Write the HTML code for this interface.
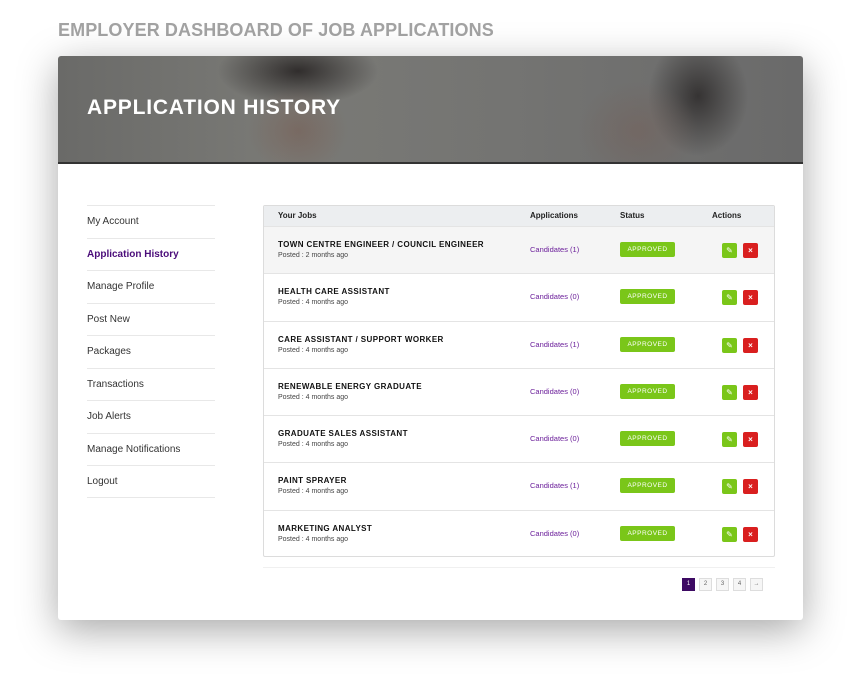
<!DOCTYPE html>
<html><head><style>
*{margin:0;padding:0;box-sizing:border-box}
body{width:861px;height:681px;background:#fff;font-family:"Liberation Sans",sans-serif;position:relative;overflow:hidden}
.title{position:absolute;left:58px;top:20px;font-size:18px;font-weight:bold;color:#a3a3a3;letter-spacing:0.1px}
.card{position:absolute;left:58px;top:56px;width:745px;height:564px;background:#fff;border-radius:3px;box-shadow:0 10px 40px rgba(0,0,0,0.35)}
.hero{position:absolute;left:0;top:0;width:745px;height:108px;border-radius:3px 3px 0 0;overflow:hidden;
background:
radial-gradient(ellipse 50px 45px at 240px 75px,rgba(120,95,85,.6),transparent),
radial-gradient(ellipse 80px 35px at 240px 15px,rgba(30,26,26,.8),transparent),
radial-gradient(ellipse 60px 50px at 580px 75px,rgba(115,98,92,.6),transparent),
radial-gradient(ellipse 50px 60px at 640px 40px,rgba(35,32,32,.75),transparent),
linear-gradient(90deg,#6a6a68 0%,#7a7a76 30%,#747472 60%,#6a6a6a 100%);border-bottom:2px solid #333}
.hero h1{position:absolute;left:29px;top:40px;color:#fff;font-size:21px;letter-spacing:0.8px;font-weight:bold}
.side{position:absolute;left:29px;top:149px;width:128px}
.side div{height:32.5px;border-top:1px solid #e8e8e8;font-size:10px;color:#333;line-height:31px}
.side div.last{border-bottom:1px solid #e8e8e8}
.side .act{color:#4b0d7a;font-weight:bold}
.tbl{position:absolute;left:205px;top:149px;width:512px;height:352px;border:1px solid #dcdcdc;border-radius:2px}
.th{height:20px;background:#eceef0;font-size:8px;font-weight:bold;color:#222;position:relative}
.th span,.row span{position:absolute}
.row{height:47.3px;border-top:1px solid #e4e4e4;position:relative}
.row.g{background:#f5f5f5}
.jt{left:14px;top:13px;font-size:8px;font-weight:bold;letter-spacing:.4px;color:#111}
.ps{left:14px;top:25px;font-size:7px;color:#444}
.cd{left:266px;top:18px;font-size:7.5px;color:#6b1f9a}
.ap{left:356px;top:15px;width:55px;height:15px;background:#7ac619;border-radius:2px;color:#fff;font-size:6.5px;text-align:center;line-height:15px;letter-spacing:.5px}
.ed{left:458px;top:16px;width:15px;height:15px;background:#7ac619;border-radius:2px;color:#fff;font-size:8px;text-align:center;line-height:15px}
.dl{left:479px;top:16px;width:15px;height:15px;background:#d91f1f;border-radius:2px;color:#fff;font-size:8px;text-align:center;line-height:15px;font-weight:bold}
.hr{position:absolute;left:205px;top:511px;width:512px;height:1px;background:#f0f0f0}
.pg{position:absolute;top:522px;width:13px;height:13px;border:1px solid #ddd;background:#f6f6f6;font-size:6px;color:#666;text-align:center;line-height:11px}
</style></head><body>
<div class="title">EMPLOYER DASHBOARD OF JOB APPLICATIONS</div>
<div class="card">
<div class="hero"><h1>APPLICATION HISTORY</h1></div>
<div class="side">
<div>My Account</div><div class="act">Application History</div><div>Manage Profile</div><div>Post New</div><div>Packages</div><div>Transactions</div><div>Job Alerts</div><div>Manage Notifications</div><div class="last">Logout</div>
</div>
<div class="tbl">
<div class="th"><span style="left:14px;top:5px">Your Jobs</span><span style="left:266px;top:5px">Applications</span><span style="left:356px;top:5px">Status</span><span style="left:448px;top:5px">Actions</span></div>
<div class="row g"><span class="jt">TOWN CENTRE ENGINEER / COUNCIL ENGINEER</span><span class="ps">Posted : 2 months ago</span><span class="cd">Candidates (1)</span><span class="ap">APPROVED</span><span class="ed">✎</span><span class="dl">×</span></div>
<div class="row"><span class="jt">HEALTH CARE ASSISTANT</span><span class="ps">Posted : 4 months ago</span><span class="cd">Candidates (0)</span><span class="ap">APPROVED</span><span class="ed">✎</span><span class="dl">×</span></div>
<div class="row"><span class="jt">CARE ASSISTANT / SUPPORT WORKER</span><span class="ps">Posted : 4 months ago</span><span class="cd">Candidates (1)</span><span class="ap">APPROVED</span><span class="ed">✎</span><span class="dl">×</span></div>
<div class="row"><span class="jt">RENEWABLE ENERGY GRADUATE</span><span class="ps">Posted : 4 months ago</span><span class="cd">Candidates (0)</span><span class="ap">APPROVED</span><span class="ed">✎</span><span class="dl">×</span></div>
<div class="row"><span class="jt">GRADUATE SALES ASSISTANT</span><span class="ps">Posted : 4 months ago</span><span class="cd">Candidates (0)</span><span class="ap">APPROVED</span><span class="ed">✎</span><span class="dl">×</span></div>
<div class="row"><span class="jt">PAINT SPRAYER</span><span class="ps">Posted : 4 months ago</span><span class="cd">Candidates (1)</span><span class="ap">APPROVED</span><span class="ed">✎</span><span class="dl">×</span></div>
<div class="row"><span class="jt">MARKETING ANALYST</span><span class="ps">Posted : 4 months ago</span><span class="cd">Candidates (0)</span><span class="ap">APPROVED</span><span class="ed">✎</span><span class="dl">×</span></div>
</div>
<div class="hr"></div>
<div class="pg" style="left:624px;background:#3d0a63;border-color:#3d0a63;color:#fff">1</div>
<div class="pg" style="left:641px">2</div>
<div class="pg" style="left:658px">3</div>
<div class="pg" style="left:675px">4</div>
<div class="pg" style="left:692px">→</div>
</div>
</body></html>
